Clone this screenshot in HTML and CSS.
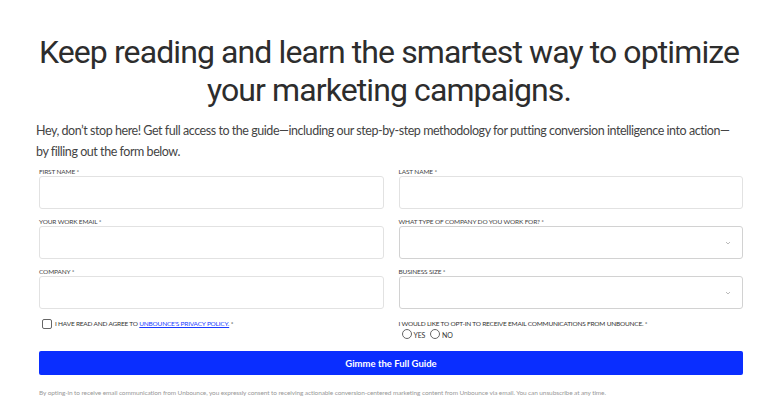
FILE: index.html
```html
<!DOCTYPE html>
<html>
<head>
    <title>Keep reading - Unbounce</title>
    <link rel="stylesheet" href="styles.css">
</head>
<body>
    <div class="container">
        <h1>Keep reading and learn the smartest way to optimize your marketing campaigns.</h1>
        <p class="intro">Hey, don’t stop here! Get full access to the guide—including our step-by-step methodology for putting conversion intelligence into action—by filling out the form below.</p>

        <form class="guide-form">
            <div class="field">
                <label>First Name *</label>
                <input type="text">
            </div>
            <div class="field">
                <label>Last Name *</label>
                <input type="text">
            </div>
            <div class="field">
                <label>Your Work Email *</label>
                <input type="text">
            </div>
            <div class="field">
                <label>What type of company do you work for? *</label>
                <div class="select">
                    <svg class="chevron" width="6" height="4" viewBox="0 0 6 4"><path d="M1 1l2 2 2-2" fill="none" stroke="#aaa" stroke-width="0.8"/></svg>
                </div>
            </div>
            <div class="field">
                <label>Company *</label>
                <input type="text">
            </div>
            <div class="field">
                <label>Business Size *</label>
                <div class="select">
                    <svg class="chevron" width="6" height="4" viewBox="0 0 6 4"><path d="M1 1l2 2 2-2" fill="none" stroke="#aaa" stroke-width="0.8"/></svg>
                </div>
            </div>
            <div class="check-row">
                <span class="box"></span>
                <span class="small-caps">I have read and agree to <a href="#">Unbounce's privacy policy.</a> *</span>
            </div>
            <div class="opt-in">
                <span class="small-caps">I would like to opt-in to receive email communications from Unbounce. *</span>
                <div class="radios">
                    <span class="radio"></span><span class="small-caps">Yes</span>
                    <span class="radio"></span><span class="small-caps">No</span>
                </div>
            </div>
        </form>

        <button class="submit">Gimme the Full Guide</button>
        <p class="fine-print">By opting-in to receive email communication from Unbounce, you expressly consent to receiving actionable conversion-centered marketing content from Unbounce via email. You can unsubscribe at any time.</p>
    </div>
</body>
</html>
```

FILE: styles.css
```css
body {
    margin: 0;
    background: #fff;
    font-family: Lato, "Open Sans", sans-serif;
    color: #333;
}

.container {
    width: 704px;
    margin: 0 auto;
    padding: 33px 25px 0 39px;
}

h1 {
    font-family: Roboto, sans-serif;
    font-weight: 400;
    font-size: 32px;
    line-height: 38px;
    letter-spacing: -0.9px;
    color: #2d2d2d;
    text-align: center;
    margin: 0 -20px 0 -24px;
}

.intro {
    font-size: 12.5px;
    line-height: 21px;
    letter-spacing: -0.45px;
    color: #444;
    margin: 11px 8px 0 -3px;
}

.guide-form {
    display: grid;
    grid-template-columns: 1fr 1fr;
    column-gap: 15px;
    margin-top: 5px;
}

.field {
    height: 50px;
}

.field label {
    display: block;
    font-size: 6.5px;
    line-height: 9px;
    letter-spacing: -0.15px;
    text-transform: uppercase;
    color: #444;
}

.field input,
.select {
    display: block;
    box-sizing: border-box;
    width: 100%;
    height: 33px;
    border: 1px solid #e2e2e2;
    border-radius: 3px;
    background: #fff;
    margin: 0;
}

.select {
    border-color: #d2d2d2;
    display: flex;
    align-items: center;
    justify-content: flex-end;
    padding-right: 11px;
}

.small-caps {
    font-size: 6.5px;
    text-transform: uppercase;
    letter-spacing: -0.2px;
    color: #333;
}

.small-caps a {
    color: #1a3cff;
}

.check-row {
    display: flex;
    align-items: flex-start;
    padding-top: 2px;
    height: 34px;
    box-sizing: border-box;
}

.box {
    width: 8px;
    height: 8px;
    border: 1px solid #666;
    border-radius: 2px;
    margin: 0 3px 0 3px;
}

.check-row .small-caps {
    line-height: 9px;
}

.opt-in {
    padding-top: 2px;
    height: 34px;
    box-sizing: border-box;
}

.opt-in > .small-caps {
    display: block;
    line-height: 9px;
}

.radios {
    display: flex;
    align-items: center;
    margin: 1px 0 0 3px;
}

.radio {
    width: 8px;
    height: 8px;
    border: 1px solid #666;
    border-radius: 50%;
    margin-right: 2px;
}

.radios .small-caps {
    font-size: 7px;
    margin: 2px 5px 0 0;
}

.submit {
    display: block;
    width: 100%;
    height: 24px;
    border: none;
    border-radius: 2px;
    background: #0a2eff;
    color: #fff;
    font-family: Lato, sans-serif;
    font-weight: 700;
    font-size: 9.5px;
}

.fine-print {
    font-size: 6.5px;
    letter-spacing: -0.1px;
    color: #999;
    margin: 14px 0 0;
}
```
